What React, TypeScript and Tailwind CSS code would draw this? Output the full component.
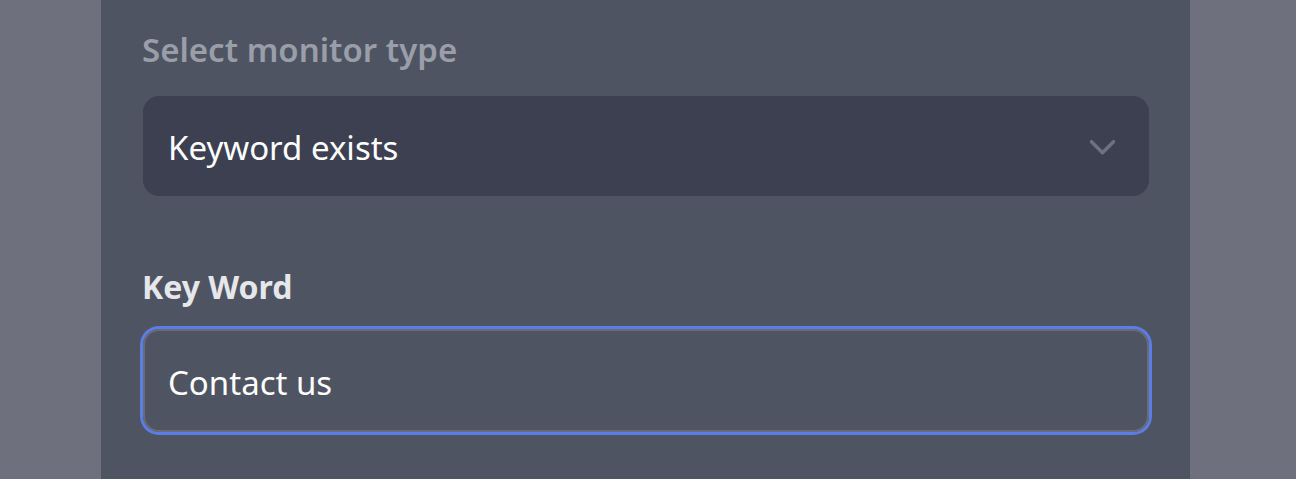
import React from "react";

export default function App() {
  return (
    <div className="min-h-[479px] h-[479px] w-full bg-[#6e717d] overflow-hidden" style={{ fontFamily: '"Noto Sans", "Open Sans", sans-serif' }}>
      <div className="ml-[101px] w-[1089px] h-full bg-[#4f5462] pl-[41px] pr-[41px] pt-[27px]">
        <div className="text-[33px] leading-[46px] font-semibold text-[#9a9ea9]">Select monitor type</div>
        <div className="mt-[23px] ml-[1px] h-[100px] rounded-[16px] bg-[#3c4051] flex items-center justify-between pl-[25px] pr-[30px]">
          <span className="text-[33px] text-white pt-[4px]">Keyword exists</span>
          <svg width="33" height="33" viewBox="0 0 24 24" fill="none" stroke="#6e7180" strokeWidth="2.5" strokeLinecap="round" strokeLinejoin="round">
            <path d="M4 8.5l8 8 8-8" />
          </svg>
        </div>
        <div className="mt-[68px] text-[32px] leading-[46px] font-bold text-[#e5e7eb]">Key Word</div>
        <div className="mt-[19px] ml-[1px] h-[103px] rounded-[16px] border-2 border-[#686b78] ring-[3px] ring-[#5b7de6] flex items-center pl-[23px]">
          <span className="text-[33px] text-white pt-[4px]">Contact us</span>
        </div>
      </div>
    </div>
  );
}
